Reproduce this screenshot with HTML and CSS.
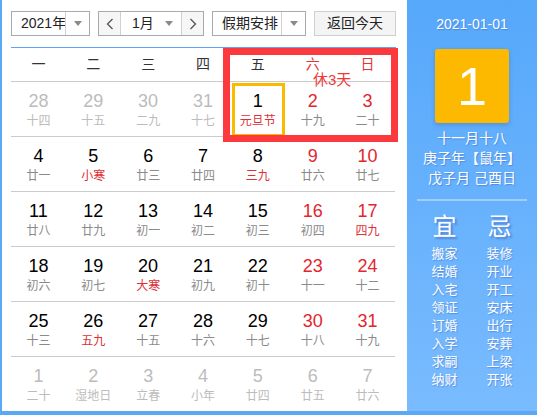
FILE: index.html
```html
<!DOCTYPE html>
<html lang="zh">
<head>
<meta charset="utf-8">
<title>万年历</title>
<link rel="stylesheet" href="styles.css">
</head>
<body>
<div class="cal">
  <div class="main">
    <div class="toolbar">
      <div class="sel sel-year"><span class="sel-text">2021年</span><span class="sel-arrow"><i class="tri"></i></span></div>
      <div class="sel sel-month">
        <span class="nav"><svg width="8" height="12" viewBox="0 0 8 12"><polyline points="6.5,1 1.5,6 6.5,11" fill="none" stroke="#555" stroke-width="1.3"/></svg></span>
        <span class="sel-text mid">1月</span><span class="sel-arrow plain"><i class="tri"></i></span>
        <span class="nav nav-r"><svg width="8" height="12" viewBox="0 0 8 12"><polyline points="1.5,1 6.5,6 1.5,11" fill="none" stroke="#555" stroke-width="1.3"/></svg></span>
      </div>
      <div class="sel sel-hol"><span class="sel-text">假期安排</span><span class="sel-arrow"><i class="tri"></i></span></div>
      <div class="btn-today">返回今天</div>
    </div>
    <div class="grid">
      <div class="week">
        <span>一</span><span>二</span><span>三</span><span>四</span><span>五</span><span class="we">六</span><span class="we">日</span>
      </div>
      <div class="row">
        <div class="cell other"><div class="n">28</div><div class="l">十四</div></div>
        <div class="cell other"><div class="n">29</div><div class="l">十五</div></div>
        <div class="cell other"><div class="n">30</div><div class="l">二九</div></div>
        <div class="cell other"><div class="n">31</div><div class="l">十七</div></div>
        <div class="cell today"><div class="n">1</div><div class="l red">元旦节</div></div>
        <div class="cell we"><div class="n">2</div><div class="l">十九</div></div>
        <div class="cell we"><div class="n">3</div><div class="l">二十</div></div>
      </div>
      <div class="row">
        <div class="cell"><div class="n">4</div><div class="l">廿一</div></div>
        <div class="cell"><div class="n">5</div><div class="l red">小寒</div></div>
        <div class="cell"><div class="n">6</div><div class="l">廿三</div></div>
        <div class="cell"><div class="n">7</div><div class="l">廿四</div></div>
        <div class="cell"><div class="n">8</div><div class="l red">三九</div></div>
        <div class="cell we"><div class="n">9</div><div class="l">廿六</div></div>
        <div class="cell we"><div class="n">10</div><div class="l">廿七</div></div>
      </div>
      <div class="row">
        <div class="cell"><div class="n">11</div><div class="l">廿八</div></div>
        <div class="cell"><div class="n">12</div><div class="l">廿九</div></div>
        <div class="cell"><div class="n">13</div><div class="l">初一</div></div>
        <div class="cell"><div class="n">14</div><div class="l">初二</div></div>
        <div class="cell"><div class="n">15</div><div class="l">初三</div></div>
        <div class="cell we"><div class="n">16</div><div class="l">初四</div></div>
        <div class="cell we"><div class="n">17</div><div class="l red">四九</div></div>
      </div>
      <div class="row">
        <div class="cell"><div class="n">18</div><div class="l">初六</div></div>
        <div class="cell"><div class="n">19</div><div class="l">初七</div></div>
        <div class="cell"><div class="n">20</div><div class="l red">大寒</div></div>
        <div class="cell"><div class="n">21</div><div class="l">初九</div></div>
        <div class="cell"><div class="n">22</div><div class="l">初十</div></div>
        <div class="cell we"><div class="n">23</div><div class="l">十一</div></div>
        <div class="cell we"><div class="n">24</div><div class="l">十二</div></div>
      </div>
      <div class="row">
        <div class="cell"><div class="n">25</div><div class="l">十三</div></div>
        <div class="cell"><div class="n">26</div><div class="l red">五九</div></div>
        <div class="cell"><div class="n">27</div><div class="l">十五</div></div>
        <div class="cell"><div class="n">28</div><div class="l">十六</div></div>
        <div class="cell"><div class="n">29</div><div class="l">十七</div></div>
        <div class="cell we"><div class="n">30</div><div class="l">十八</div></div>
        <div class="cell we"><div class="n">31</div><div class="l">十九</div></div>
      </div>
      <div class="row last">
        <div class="cell other"><div class="n">1</div><div class="l">二十</div></div>
        <div class="cell other"><div class="n">2</div><div class="l">湿地日</div></div>
        <div class="cell other"><div class="n">3</div><div class="l">立春</div></div>
        <div class="cell other"><div class="n">4</div><div class="l">小年</div></div>
        <div class="cell other"><div class="n">5</div><div class="l">廿四</div></div>
        <div class="cell other"><div class="n">6</div><div class="l">廿五</div></div>
        <div class="cell other"><div class="n">7</div><div class="l">廿六</div></div>
      </div>
    </div>
    <div class="annot-box"></div>
    <div class="annot-text">休3天</div>
  </div>
  <aside class="side">
    <div class="s-date">2021-01-01</div>
    <div class="s-big">1</div>
    <div class="s-lunar">
      <div>十一月十八</div>
      <div>庚子年【鼠年】</div>
      <div>戊子月 己酉日</div>
    </div>
    <div class="s-sep"></div>
    <div class="s-yj">
      <div class="yj-col">
        <div class="yj-title">宜</div>
        <div>搬家</div><div>结婚</div><div>入宅</div><div>领证</div><div>订婚</div><div>入学</div><div>求嗣</div><div>纳财</div>
      </div>
      <div class="yj-col">
        <div class="yj-title">忌</div>
        <div>装修</div><div>开业</div><div>开工</div><div>安床</div><div>出行</div><div>安葬</div><div>上梁</div><div>开张</div>
      </div>
    </div>
  </aside>
</div>
</body>
</html>
```
FILE: styles.css
```css
html, body {
  margin: 0;
  padding: 0;
  background: #fff;
}
body {
  font-family: "Liberation Sans", "Noto Sans CJK SC", sans-serif;
  color: #333;
}
.cal {
  display: flex;
  width: 537px;
  height: 415px;
  box-sizing: border-box;
  border-left: 2px solid #5aa9f7;
  border-bottom: 4px solid #5aa9f7;
  overflow: hidden;
}
.main {
  position: relative;
  width: 405px;
  flex: none;
  box-sizing: border-box;
  padding-left: 9px;
  background: #fff;
}
.toolbar {
  display: flex;
  gap: 8px;
  margin-top: 11px;
  height: 25px;
  width: 385px;
  padding-bottom: 11px;
  border-bottom: 1px solid #5aa7f6;
}
.sel {
  display: flex;
  box-sizing: border-box;
  height: 25px;
  border: 1px solid #a9a9a9;
  background: #fff;
  font-size: 14px;
  line-height: 23px;
  color: #222;
  white-space: nowrap;
  overflow: hidden;
}
.sel-year { width: 79px; }
.sel-month { width: 106px; }
.sel-hol { width: 94px; }
.sel-text {
  flex: 1;
  min-width: 0;
  padding-left: 9px;
  white-space: nowrap;
}
.sel-arrow {
  flex: none;
  width: 23px;
  border-left: 1px solid #d0d0d0;
  display: flex;
  align-items: center;
  justify-content: center;
}
.sel-arrow.plain {
  border-left: none;
  width: 24px;
}
.tri {
  display: block;
  width: 0;
  height: 0;
  border-left: 4px solid transparent;
  border-right: 4px solid transparent;
  border-top: 5px solid #8a8a8a;
}
.nav {
  flex: none;
  width: 21px;
  display: flex;
  align-items: center;
  justify-content: center;
  background: #f6f6f6;
  border-right: 1px solid #d0d0d0;
}
.nav-r {
  border-right: none;
  border-left: 1px solid #d0d0d0;
}
.sel-text.mid {
  padding-left: 11px;
}
.btn-today {
  box-sizing: border-box;
  width: 82px;
  height: 25px;
  border: 1px solid #cfcfcf;
  background: #f4f4f4;
  font-size: 14px;
  line-height: 23px;
  text-align: center;
  color: #222;
  white-space: nowrap;
}
.grid {
  width: 384px;
}
.week {
  display: grid;
  grid-template-columns: repeat(7, 1fr);
  height: 33px;
  line-height: 33px;
  border-bottom: 1px solid #cbcbcb;
  text-align: center;
  font-size: 14px;
  color: #333;
}
.week .we {
  color: #e8333a;
}
.row {
  display: grid;
  grid-template-columns: repeat(7, 1fr);
  height: 54px;
  border-bottom: 1px solid #cbcbcb;
}
.row.last {
  height: 55px;
  border-bottom: none;
}
.cell {
  position: relative;
  text-align: center;
  padding-top: 8px;
}
.n {
  font-size: 18px;
  line-height: 22px;
  color: #000;
}
.l {
  margin-top: 1px;
  font-size: 12px;
  line-height: 16px;
  color: #8a8a8a;
}
.l.red {
  color: #e02f35;
}
.cell.we .n {
  color: #e3262e;
}
.cell.other .n {
  color: #bcbcbc;
}
.cell.other .l {
  color: #bcbcbc;
}
.cell.today::after {
  content: "";
  position: absolute;
  left: 2px;
  right: 0;
  top: 1px;
  bottom: -1px;
  border: 3px solid #fbb900;
}
.annot-box {
  position: absolute;
  left: 221px;
  top: 48px;
  width: 175px;
  height: 94px;
  box-sizing: border-box;
  border: 7px solid #fc3a3d;
}
.annot-text {
  position: absolute;
  left: 311px;
  top: 71px;
  font-size: 15px;
  line-height: 18px;
  color: #f03a3a;
}
.side {
  flex: 1;
  background: linear-gradient(#56a8fb, #79bbfe);
  color: #fff;
  text-align: center;
  text-shadow: 1px 1px 1px rgba(50, 70, 170, 0.35);
}
.s-date {
  padding-top: 15px;
  font-size: 14px;
  line-height: 18px;
}
.s-big {
  width: 74px;
  height: 74px;
  margin: 16px auto 0;
  background: #fdb800;
  border-radius: 3px;
  box-shadow: 0 2px 4px rgba(30, 60, 140, 0.25);
  font-size: 54px;
  line-height: 74px;
  text-shadow: none;
}
.s-lunar {
  margin-top: 5px;
  font-size: 14px;
  line-height: 20px;
}
.s-sep {
  width: 110px;
  height: 2px;
  margin: 11px auto 0;
  background: #9fcdfc;
}
.s-yj {
  display: grid;
  grid-template-columns: 55px 55px;
  justify-content: center;
  margin-top: 11px;
  font-size: 13px;
  line-height: 18px;
}
.yj-title {
  font-size: 24px;
  line-height: 30px;
  margin-bottom: 3px;
  text-shadow: 2px 2px 2px rgba(50, 70, 170, 0.45);
}
```
